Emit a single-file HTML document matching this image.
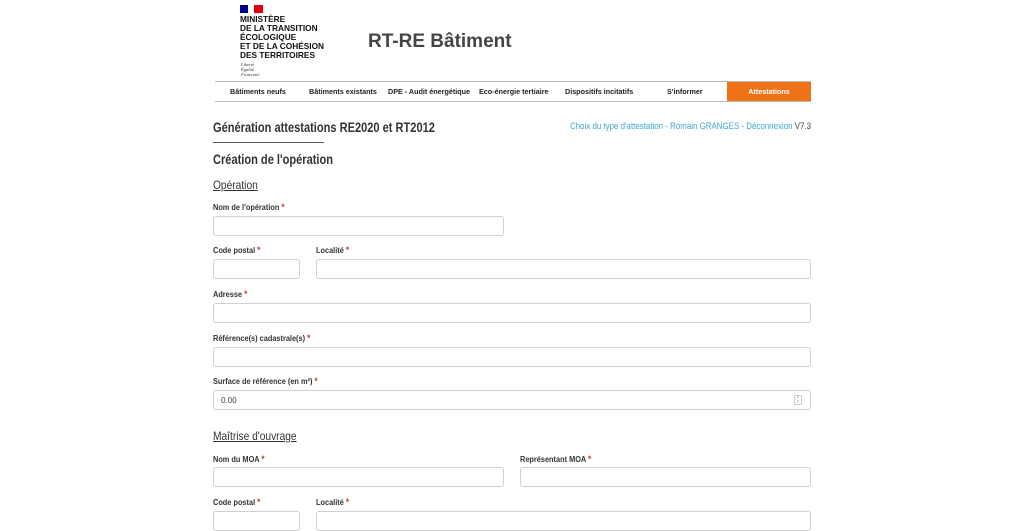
<!DOCTYPE html>
<html><head><meta charset="utf-8"><style>
*{margin:0;padding:0;box-sizing:border-box}
body{width:1024px;height:514px;overflow:hidden;background:#fff;font-family:"Liberation Sans",Arial,sans-serif;color:#333;position:relative}
.a{position:absolute;white-space:nowrap}
.logo{left:240px;top:15px;font-weight:bold;font-size:8.3px;line-height:9px;color:#111}
.dev{left:241px;top:62px;font-style:italic;font-size:4.5px;line-height:5px;font-family:"Liberation Serif",serif;color:#333}
.title{left:368px;top:31px;font-size:19px;font-weight:bold;color:#444}
.line{position:absolute;left:215px;width:596px;height:1px;background:#bbb}
.nav{top:87px;font-size:7.2px;font-weight:bold;color:#222}
.att{position:absolute;left:727px;top:82px;width:84px;height:19px;background:#ef7216;color:#fff;font-size:7.2px;font-weight:bold;text-align:center;line-height:19px}
.c{transform-origin:left center;transform:scaleX(.92)}
h1{position:absolute;left:213px;top:119px;font-size:14px;font-weight:bold;color:#333;transform-origin:left center;transform:scaleX(.79);white-space:nowrap}
h2{position:absolute;left:213px;top:151px;font-size:14px;font-weight:bold;color:#333;transform-origin:left center;transform:scaleX(.79);white-space:nowrap}
.sub{left:213px;font-size:12px;color:#333;text-decoration:underline;transform-origin:left center;transform:scaleX(.85)}
.lbl{left:213px;font-size:8px;font-weight:bold;color:#333}
.lbl b{color:#c0392b;font-size:9px}
.in{position:absolute;height:20px;border:1px solid #d0d0d0;border-radius:3px;background:#fff}
.links{left:570px;top:121px;font-size:9px;color:#3aa7d6;transform-origin:left center;transform:scaleX(.88)}
</style></head><body>
<div class="a" style="left:240px;top:5px;width:8px;height:8px;background:#000091"></div>
<div class="a" style="left:248px;top:5px;width:6px;height:8px;background:#fff"></div>
<div class="a" style="left:254px;top:5px;width:9px;height:8px;background:#e1000f"></div>
<div class="a logo">MINISTÈRE<br>DE LA TRANSITION<br>ÉCOLOGIQUE<br>ET DE LA COHÉSION<br>DES TERRITOIRES</div>
<div class="a dev">Liberté<br>Égalité<br>Fraternité</div>
<div class="a title">RT-RE Bâtiment</div>
<div class="line" style="top:81px"></div>
<div class="line" style="top:101px"></div>
<div class="a nav" style="left:230px">Bâtiments neufs</div>
<div class="a nav" style="left:309px">Bâtiments existants</div>
<div class="a nav" style="left:388px">DPE - Audit énergétique</div>
<div class="a nav" style="left:479px">Eco-énergie tertiaire</div>
<div class="a nav" style="left:565px">Dispositifs incitatifs</div>
<div class="a nav" style="left:667px">S'informer</div>
<div class="att">Attestations</div>
<h1>Génération attestations RE2020 et RT2012</h1>
<div class="a" style="left:213px;top:142px;width:111px;height:1px;background:#555"></div>
<h2>Création de l'opération</h2>
<div class="a links">Choix du type d'attestation - Romain GRANGES - Déconnexion <span style="color:#444">V7.3</span></div>
<div class="a sub" style="top:178px">Opération</div>
<div class="a lbl c" style="top:202px">Nom de l'opération <b>*</b></div>
<div class="in" style="left:213px;top:216px;width:291px"></div>
<div class="a lbl c" style="top:245px">Code postal <b>*</b></div>
<div class="a lbl c" style="top:245px;left:316px">Localité <b>*</b></div>
<div class="in" style="left:213px;top:259px;width:87px"></div>
<div class="in" style="left:316px;top:259px;width:495px"></div>
<div class="a lbl c" style="top:289px">Adresse <b>*</b></div>
<div class="in" style="left:213px;top:303px;width:598px"></div>
<div class="a lbl c" style="top:333px">Référence(s) cadastrale(s) <b>*</b></div>
<div class="in" style="left:213px;top:347px;width:598px"></div>
<div class="a lbl c" style="top:376px">Surface de référence (en m²) <b>*</b></div>
<div class="in" style="left:213px;top:390px;width:598px"><span class="a" style="left:7px;top:5px;font-size:8px;color:#444">0.00</span><span class="a" style="left:580px;top:4px;width:8px;height:10px;border:1px solid #ccc;border-radius:2px;font-size:5px;color:#999;line-height:4px;text-align:center">˄<br>˅</span></div>
<div class="a sub" style="top:429px">Maîtrise d'ouvrage</div>
<div class="a lbl c" style="top:454px">Nom du MOA <b>*</b></div>
<div class="a lbl c" style="top:454px;left:520px">Représentant MOA <b>*</b></div>
<div class="in" style="left:213px;top:467px;width:291px"></div>
<div class="in" style="left:520px;top:467px;width:291px"></div>
<div class="a lbl c" style="top:497px">Code postal <b>*</b></div>
<div class="a lbl c" style="top:497px;left:316px">Localité <b>*</b></div>
<div class="in" style="left:213px;top:511px;width:87px"></div>
<div class="in" style="left:316px;top:511px;width:495px"></div>
</body></html>
